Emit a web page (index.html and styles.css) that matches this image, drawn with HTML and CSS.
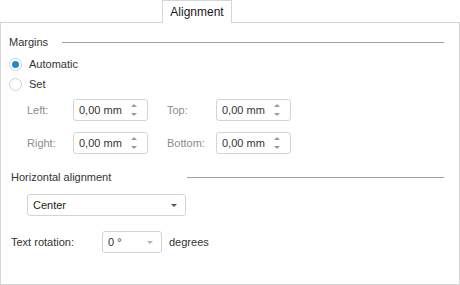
FILE: index.html
```html
<!DOCTYPE html>
<html lang="en">
<head>
    <meta charset="UTF-8">
    <title>Alignment</title>
    <link rel="stylesheet" href="styles.css">
</head>
<body>
    <div class="tabs">
        <div class="tab active">Alignment</div>
    </div>
    <div class="panel">
        <div class="group-title">
            <span>Margins</span>
            <span class="rule rule-margins"></span>
        </div>

        <label class="radio-row">
            <span class="radio checked"></span>
            <span>Automatic</span>
        </label>
        <label class="radio-row">
            <span class="radio"></span>
            <span>Set</span>
        </label>

        <div class="margin-row first">
            <span class="field-label left-col">Left:</span>
            <div class="spin">
                <span class="spin-value">0,00 mm</span>
                <span class="spin-arrows"><i class="up"></i><i class="down"></i></span>
            </div>
            <span class="field-label right-col">Top:</span>
            <div class="spin">
                <span class="spin-value">0,00 mm</span>
                <span class="spin-arrows"><i class="up"></i><i class="down"></i></span>
            </div>
        </div>
        <div class="margin-row">
            <span class="field-label left-col">Right:</span>
            <div class="spin">
                <span class="spin-value">0,00 mm</span>
                <span class="spin-arrows"><i class="up"></i><i class="down"></i></span>
            </div>
            <span class="field-label right-col">Bottom:</span>
            <div class="spin">
                <span class="spin-value">0,00 mm</span>
                <span class="spin-arrows"><i class="up"></i><i class="down"></i></span>
            </div>
        </div>

        <div class="group-title second">
            <span>Horizontal alignment</span>
            <span class="rule rule-align"></span>
        </div>

        <div class="combo combo-align">
            <span>Center</span>
            <i class="caret"></i>
        </div>

        <div class="rotation-row">
            <span class="rotation-label">Text rotation:</span>
            <div class="combo combo-rotation">
                <span>0 °</span>
                <i class="caret light"></i>
            </div>
            <span class="unit">degrees</span>
        </div>
    </div>
</body>
</html>
```

FILE: styles.css
```css
body {
    margin: 0;
    background-color: #fff;
    font-family: "Liberation Sans", Arial, sans-serif;
    font-size: 11px;
    color: #333;
    width: 460px;
}
.tabs {
    display: flex;
    height: 22px;
    padding-left: 162px;
    box-sizing: border-box;
}
.tab {
    width: 70px;
    height: 23px;
    box-sizing: border-box;
    border: 1px solid #d6d6d6;
    border-bottom: none;
    background-color: #fff;
    color: #1a1a1a;
    font-size: 12px;
    display: flex;
    justify-content: center;
    align-items: center;
    padding-bottom: 1px;
    position: relative;
    z-index: 1;
}
.panel {
    height: 263px;
    box-sizing: border-box;
    border: 1px solid #d6d6d6;
    padding-top: 11px;
}
.group-title {
    display: flex;
    align-items: center;
    height: 16px;
    padding-left: 8px;
    padding-right: 15px;
    color: #333;
}
.group-title.second {
    margin-top: 15px;
    padding-left: 10px;
}
.rule {
    flex: 1;
    height: 1px;
    background-color: #a0a0a0;
}
.rule-margins {
    margin-left: 14px;
}
.rule-align {
    margin-left: 76px;
}
.radio-row {
    display: flex;
    align-items: center;
    height: 20px;
    padding-left: 8px;
}
.radio-row:first-of-type {
    margin-top: 4px;
}
.radio {
    width: 13px;
    height: 13px;
    box-sizing: border-box;
    border: 1px solid #d2d2d2;
    border-radius: 50%;
    margin-right: 7px;
    display: flex;
    justify-content: center;
    align-items: center;
}
.radio.checked::after {
    content: "";
    width: 7px;
    height: 7px;
    border-radius: 50%;
    background-color: #1e87d6;
}
.margin-row {
    display: flex;
    align-items: center;
    margin-top: 11px;
    padding-left: 26px;
}
.margin-row.first {
    margin-top: 5px;
}
.field-label {
    color: #8c8c8c;
}
.left-col {
    width: 46px;
}
.right-col {
    width: 49px;
    margin-left: 19px;
}
.spin {
    width: 75px;
    height: 22px;
    box-sizing: border-box;
    border: 1px solid #d4d4d4;
    border-radius: 3px;
    display: flex;
    align-items: center;
    padding-left: 5px;
}
.spin-value {
    flex: 1;
}
.spin-arrows {
    width: 7px;
    margin-right: 10px;
    display: flex;
    flex-direction: column;
    align-items: center;
    gap: 6px;
}
.spin-arrows i {
    width: 0;
    height: 0;
    border-left: 3px solid transparent;
    border-right: 3px solid transparent;
}
.spin-arrows .up {
    border-bottom: 3px solid #9a9a9a;
}
.spin-arrows .down {
    border-top: 3px solid #9a9a9a;
}
.combo {
    height: 22px;
    box-sizing: border-box;
    border: 1px solid #d4d4d4;
    border-radius: 3px;
    display: flex;
    align-items: center;
    justify-content: space-between;
    padding-left: 5px;
    padding-right: 8px;
}
.combo-align {
    width: 159px;
    margin-top: 9px;
    margin-left: 26px;
    color: #222;
}
.caret {
    width: 0;
    height: 0;
    border-left: 3px solid transparent;
    border-right: 3px solid transparent;
    border-top: 3px solid #555;
}
.caret.light {
    border-top-color: #b0b0b0;
}
.rotation-row {
    display: flex;
    align-items: center;
    margin-top: 15px;
    padding-left: 10px;
}
.rotation-label {
    width: 91px;
}
.combo-rotation {
    width: 60px;
}
.unit {
    margin-left: 7px;
}
```
